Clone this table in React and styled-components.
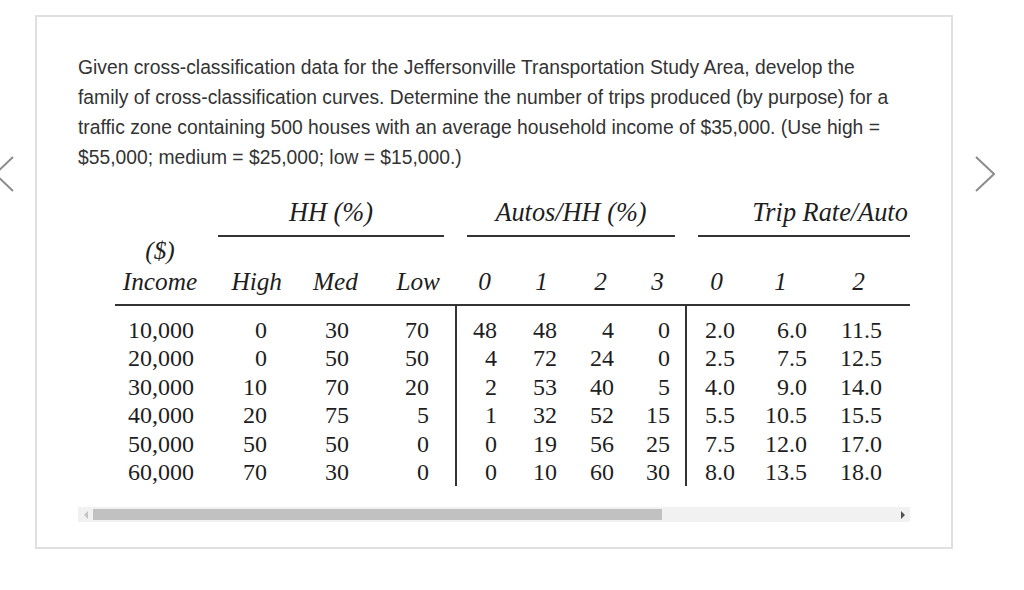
import React from 'react';
import styled, { createGlobalStyle } from 'styled-components';

const GlobalStyle = createGlobalStyle`
    html, body {
        margin: 0;
        padding: 0;
        background: #fff;
    }
`;

const Page = styled.div`
    display: flex;
    align-items: flex-start;
    padding-top: 15px;
    width: 1024px;
    height: 590px;
    box-sizing: border-box;
    overflow: hidden;
`;

const NavButton = styled.div`
    flex: 0 0 ${(p) => p.$width}px;
    margin-top: 141px;
    margin-left: ${(p) => p.$offset}px;
    display: flex;
`;

const Card = styled.div`
    flex: 0 0 918px;
    width: 918px;
    min-width: 0;
    box-sizing: border-box;
    border: 2px solid #e0e0e0;
    padding: 36px 41px 25px;
`;

const Question = styled.p`
    margin: 0;
    max-width: 818px;
    font-family: 'Liberation Sans', Arial, sans-serif;
    font-size: 19.3px;
    line-height: 30px;
    color: #333;
`;

const TableWrap = styled.div`
    margin-top: 25px;
    overflow: hidden;
`;

const DataTable = styled.table`
    margin-left: 37px;
    border-collapse: collapse;
    table-layout: fixed;
    width: 857px;
    font-family: 'Liberation Serif', 'Times New Roman', serif;
    font-size: 24px;
    color: #1e1e1e;
`;

const GroupCell = styled.th`
    padding: 0;
    font-weight: normal;
`;

const GroupLabel = styled.span`
    display: block;
    margin: 0 ${(p) => p.$mr}px 0 ${(p) => p.$ml}px;
    padding-bottom: 7px;
    border-bottom: 2px solid #333;
    font-style: italic;
    font-size: 26.3px;
    line-height: 30px;
    text-align: center;
    white-space: nowrap;
`;

const HeadCell = styled.th`
    padding: 0 ${(p) => p.$pad}px 5px 0;
    font-weight: normal;
    font-style: italic;
    font-size: 25.3px;
    line-height: 36px;
    vertical-align: bottom;
    text-align: ${(p) => (p.$center ? 'center' : 'right')};
    border-bottom: 2px solid #333;
    white-space: nowrap;
`;

const UnitLine = styled.div`
    line-height: 26px;
`;

const BodyRow = styled.tr`
    &:first-child td {
        padding-top: 10px;
    }
`;

const Cell = styled.td`
    padding: 0 ${(p) => p.$pad}px 0 0;
    line-height: 28.4px;
    text-align: right;
    border-left: ${(p) => (p.$divider ? '2px solid #333' : 'none')};
    white-space: nowrap;
`;

const ScrollTrack = styled.div`
    margin-top: 21px;
    height: 15px;
    background: #f1f1f1;
    display: flex;
    align-items: center;
`;

const ScrollArrow = styled.div`
    flex: 0 0 15px;
    height: 15px;
    display: flex;
    align-items: center;
    justify-content: center;
    margin-left: ${(p) => (p.$push ? 'auto' : '0')};

    &::before {
        content: '';
        width: 0;
        height: 0;
        border-top: 4px solid transparent;
        border-bottom: 4px solid transparent;
        ${(p) =>
            p.$dir === 'left'
                ? 'border-right: 4px solid #c4c4c4;'
                : 'border-left: 4px solid #505050;'}
    }
`;

const ScrollThumb = styled.div`
    flex: 0 0 569px;
    height: 11px;
    background: #c1c1c1;
`;

const columns = [
    { width: 90, pad: 11 },
    { width: 85, pad: 23, hpad: 8, label: 'High' },
    { width: 82, pad: 23, hpad: 14, label: 'Med' },
    { width: 84, pad: 26, hpad: 16, label: 'Low' },
    { width: 54, pad: 13, hpad: 19, label: '0', divider: true },
    { width: 60, pad: 13, hpad: 22, label: '1' },
    { width: 58, pad: 14, hpad: 21, label: '2' },
    { width: 58, pad: 15, hpad: 22, label: '3' },
    { width: 66, pad: 17, hpad: 29, label: '0', divider: true },
    { width: 70, pad: 15, hpad: 35, label: '1' },
    { width: 150, pad: 90, hpad: 107, label: '2' },
];

const rows = [
    ['10,000', '0', '30', '70', '48', '48', '4', '0', '2.0', '6.0', '11.5'],
    ['20,000', '0', '50', '50', '4', '72', '24', '0', '2.5', '7.5', '12.5'],
    ['30,000', '10', '70', '20', '2', '53', '40', '5', '4.0', '9.0', '14.0'],
    ['40,000', '20', '75', '5', '1', '32', '52', '15', '5.5', '10.5', '15.5'],
    ['50,000', '50', '50', '0', '0', '19', '56', '25', '7.5', '12.0', '17.0'],
    ['60,000', '70', '30', '0', '0', '10', '60', '30', '8.0', '13.5', '18.0'],
];

const Chevron = ({ dir }) => (
    <svg width="20" height="37" viewBox="0 0 20 37">
        <polyline
            points={dir === 'left' ? '19,1 1,18 19,35' : '1,1 19,18 1,35'}
            fill="none"
            stroke="#8c8c8c"
            strokeWidth="2"
        />
    </svg>
);

export default function App() {
    return (
        <>
            <GlobalStyle />
            <Page>
                <NavButton $width={41} $offset={-6}>
                    <Chevron dir="left" />
                </NavButton>
                <Card>
                    <Question>
                        Given cross-classification data for the Jeffersonville Transportation Study Area, develop
                        the family of cross-classification curves. Determine the number of trips produced (by
                        purpose) for a traffic zone containing 500 houses with an average household income of
                        $35,000. (Use high = $55,000; medium = $25,000; low = $15,000.)
                    </Question>

                    <TableWrap>
                        <DataTable>
                            <colgroup>
                                {columns.map((c, i) => (
                                    <col key={i} style={{ width: c.width }} />
                                ))}
                            </colgroup>
                            <thead>
                                <tr>
                                    <GroupCell />
                                    <GroupCell colSpan={3}>
                                        <GroupLabel $ml={13} $mr={12}>HH (%)</GroupLabel>
                                    </GroupCell>
                                    <GroupCell colSpan={4}>
                                        <GroupLabel $ml={11} $mr={11}>Autos/HH (%)</GroupLabel>
                                    </GroupCell>
                                    <GroupCell colSpan={3}>
                                        <GroupLabel $ml={12} $mr={10}>Trip Rate/Auto</GroupLabel>
                                    </GroupCell>
                                </tr>
                                <tr>
                                    <HeadCell $center $pad={0}>
                                        <UnitLine>($)</UnitLine>
                                        Income
                                    </HeadCell>
                                    {columns.slice(1).map((c, i) => (
                                        <HeadCell key={i} $pad={c.hpad}>
                                            {c.label}
                                        </HeadCell>
                                    ))}
                                </tr>
                            </thead>
                            <tbody>
                                {rows.map((r, ri) => (
                                    <BodyRow key={ri}>
                                        {r.map((v, ci) => (
                                            <Cell key={ci} $pad={columns[ci].pad} $divider={columns[ci].divider}>
                                                {v}
                                            </Cell>
                                        ))}
                                    </BodyRow>
                                ))}
                            </tbody>
                        </DataTable>
                    </TableWrap>

                    <ScrollTrack>
                        <ScrollArrow $dir="left" />
                        <ScrollThumb />
                        <ScrollArrow $dir="right" $push />
                    </ScrollTrack>
                </Card>
                <NavButton $width={20} $offset={22}>
                    <Chevron dir="right" />
                </NavButton>
            </Page>
        </>
    );
}
